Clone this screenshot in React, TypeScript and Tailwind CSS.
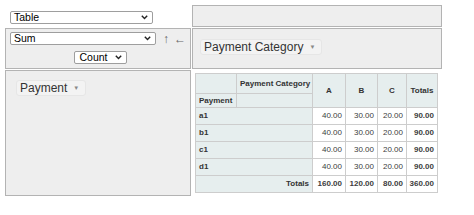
import type { ReactNode } from 'react'

const data = [
    { key: 'a1', vals: ['40.00', '30.00', '20.00'], total: '90.00' },
    { key: 'b1', vals: ['40.00', '30.00', '20.00'], total: '90.00' },
    { key: 'c1', vals: ['40.00', '30.00', '20.00'], total: '90.00' },
    { key: 'd1', vals: ['40.00', '30.00', '20.00'], total: '90.00' },
]

function FakeSelect({ label, className }: { label: string; className: string }) {
    return (
        <div className={`flex h-[13px] items-center justify-between rounded-[2px] border border-[#9e9e9e] bg-white pl-[3px] pr-[4px] text-[10.5px] leading-none text-black ${className}`}>
            <span>{label}</span>
            <svg width="7" height="5" viewBox="0 0 7 5">
                <path d="M0.8 0.8L3.5 3.6L6.2 0.8" stroke="#222" strokeWidth="1.4" fill="none" />
            </svg>
        </div>
    )
}

function Attr({ name }: { name: string }) {
    return (
        <div className="flex h-[16px] w-fit items-center rounded-[3px] border border-[#e6e6e6] bg-[#f3f3f3] pl-[3px] pr-[6px] text-[12px] leading-none text-[#333]">
            <span>{name}</span>
            <span className="ml-[6px] text-[6px] text-[#888]">▼</span>
        </div>
    )
}

function Box({ children, className = '' }: { children?: ReactNode; className?: string }) {
    return <div className={`border border-[#b3b3b3] bg-[#eeeeee] ${className}`}>{children}</div>
}

const th = 'border border-[#cdcdcd] bg-[#e6eeee] font-bold text-[#333]'
const td = 'border border-[#cdcdcd] bg-white pr-[3px] text-right text-[#3d3d3d]'

export default function App() {
    return (
        <div className="h-[215px] w-[474px] bg-white font-['Liberation_Sans',Arial,sans-serif]">
            <div className="grid grid-cols-[186px_250px] grid-rows-[22px_41px_126px] gap-x-[1px] gap-y-[1px] pl-[5px] pt-[5px]">
                {/* renderer */}
                <div className="flex items-center pl-[5px] pt-[2px]">
                    <FakeSelect label="Table" className="w-[143px]" />
                </div>
                {/* unused attrs */}
                <Box />

                {/* aggregator */}
                <Box className="flex flex-col pl-[4px] pt-[3px]">
                    <div className="flex items-center">
                        <FakeSelect label="Sum" className="w-[146px]" />
                        <span className="ml-[7px] text-[12px] leading-none text-[#666]">↑</span>
                        <span className="ml-[5px] text-[12px] leading-none text-[#666]">←</span>
                    </div>
                    <div className="mt-[6px] flex justify-center">
                        <FakeSelect label="Count" className="w-[53px] pl-[5px]" />
                    </div>
                </Box>
                {/* cols */}
                <Box className="pl-[7px] pt-[10px]">
                    <Attr name="Payment Category" />
                </Box>

                {/* rows */}
                <Box className="pl-[10px] pt-[9px]">
                    <Attr name="Payment" />
                </Box>
                {/* output */}
                <div className="pl-[3px] pt-[3px]">
                    <table className="table-fixed border-collapse text-[8px] leading-none">
                        <colgroup>
                            <col className="w-[41px]" />
                            <col className="w-[76px]" />
                            <col className="w-[33px]" />
                            <col className="w-[32px]" />
                            <col className="w-[29px]" />
                            <col className="w-[31px]" />
                        </colgroup>
                        <thead>
                            <tr className="h-[20px]">
                                <th className={th}></th>
                                <th className={`${th} pl-[3px] text-left`}>Payment Category</th>
                                <th rowSpan={2} className={`${th} text-center`}>A</th>
                                <th rowSpan={2} className={`${th} text-center`}>B</th>
                                <th rowSpan={2} className={`${th} text-center`}>C</th>
                                <th rowSpan={2} className={`${th} text-center`}>Totals</th>
                            </tr>
                            <tr className="h-[14px]">
                                <th className={`${th} pl-[3px] text-left`}>Payment</th>
                                <th className={th}></th>
                            </tr>
                        </thead>
                        <tbody>
                            {data.map((r) => (
                                <tr key={r.key} className="h-[17px]">
                                    <th colSpan={2} className={`${th} pl-[3px] text-left`}>{r.key}</th>
                                    {r.vals.map((v, i) => (
                                        <td key={i} className={td}>{v}</td>
                                    ))}
                                    <td className={`${td} font-bold`}>{r.total}</td>
                                </tr>
                            ))}
                            <tr className="h-[17px]">
                                <th colSpan={2} className={`${th} pr-[3px] text-right`}>Totals</th>
                                <td className={`${td} font-bold`}>160.00</td>
                                <td className={`${td} font-bold`}>120.00</td>
                                <td className={`${td} font-bold`}>80.00</td>
                                <td className={`${td} font-bold`}>360.00</td>
                            </tr>
                        </tbody>
                    </table>
                </div>
            </div>
        </div>
    )
}
